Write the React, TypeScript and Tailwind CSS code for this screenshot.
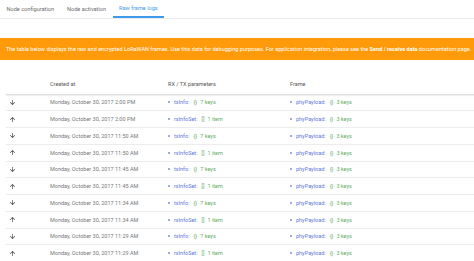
import React from "react";

const rows = [
  { down: true, time: "2:00 PM" },
  { down: false, time: "2:00 PM" },
  { down: true, time: "11:50 AM" },
  { down: false, time: "11:50 AM" },
  { down: true, time: "11:45 AM" },
  { down: false, time: "11:45 AM" },
  { down: true, time: "11:34 AM" },
  { down: false, time: "11:34 AM" },
  { down: true, time: "11:29 AM" },
  { down: false, time: "11:29 AM" },
];

function Arrow({ down }: { down: boolean }) {
  return (
    <svg width="5" height="7" viewBox="4 3 16 18" fill="#3a3a3a">
      {down ? (
        <path d="M20 12l-1.41-1.41L13 16.17V4h-2v12.17l-5.58-5.59L4 12l8 8 8-8z" />
      ) : (
        <path d="M4 12l1.41 1.41L11 7.83V20h2V7.83l5.58 5.59L20 12l-8-8-8 8z" />
      )}
    </svg>
  );
}

function JsonNode({ name, brace, size }: { name: string; brace: string; size: string }) {
  return (
    <div className="flex items-center">
      <span className="mr-[4px] inline-block h-[2px] w-[2px] rounded-full bg-[#7d8fd8]" />
      <span className="text-[#6079dc]">{name}:</span>
      <span className="ml-[4px] text-[#5fae5f]">{brace}</span>
      <span className="ml-[3px] text-[#5fae5f]">{size}</span>
    </div>
  );
}

export default function App() {
  return (
    <div
      className="h-[261px] w-[474px] overflow-hidden bg-white text-[5.5px]"
      style={{ fontFamily: "Roboto, 'Liberation Sans', sans-serif" }}
    >
      <div className="flex h-[19px] border-b border-[#ececec] text-[5.6px] text-[#6d6d6d]">
        <div className="flex items-center px-[6.5px]">Node configuration</div>
        <div className="flex items-center px-[6.5px]">Node activation</div>
        <div className="flex items-center border-b-2 border-[#3d9be9] px-[6.5px] text-[#3d9be9]">
          Raw frame logs
        </div>
      </div>
      <div className="mt-[19px] flex h-[22px] items-center whitespace-nowrap bg-[#ff9a0a] px-[6px] text-[5.55px] text-white">
        The table below displays the raw and encrypted LoRaWAN frames. Use this data for debugging purposes. For
        application integration, please see the&nbsp;<b>Send / receive data</b>&nbsp;documentation page.
      </div>
      <div className="ml-[6px] mt-[15px]">
        <div className="flex h-[19.5px] items-center border-b border-[#dedede] text-[#555] shadow-[0_1px_1px_rgba(0,0,0,0.06)]">
          <div className="w-[44px]" />
          <div className="w-[118px]">Created at</div>
          <div className="w-[122px]">RX / TX parameters</div>
          <div>Frame</div>
        </div>
        {rows.map((r, i) => (
          <div key={i} className="flex h-[16.75px] items-center border-b border-[#ececec] text-[#777]">
            <div className="flex w-[44px] pl-[4px]">
              <Arrow down={r.down} />
            </div>
            <div className="w-[118px]">Monday, October 30, 2017 {r.time}</div>
            <div className="w-[122px]">
              {r.down ? (
                <JsonNode name="txInfo" brace="{}" size="7 keys" />
              ) : (
                <JsonNode name="rxInfoSet" brace="[]" size="1 item" />
              )}
            </div>
            <div>
              <JsonNode name="phyPayload" brace="{}" size="3 keys" />
            </div>
          </div>
        ))}
      </div>
    </div>
  );
}
